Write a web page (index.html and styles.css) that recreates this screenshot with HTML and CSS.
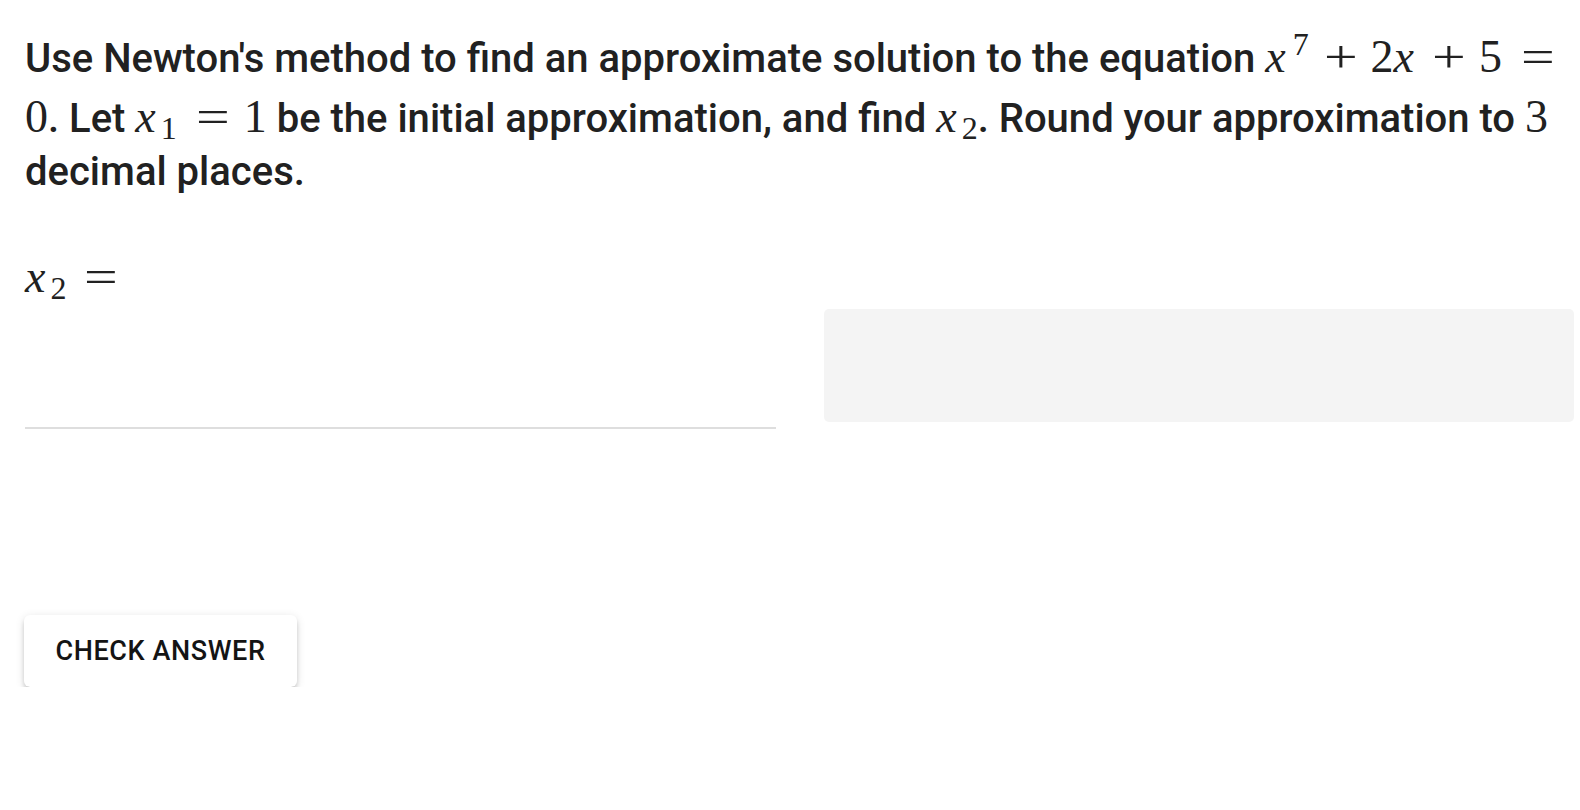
FILE: index.html
```html
<!DOCTYPE html>
<html>
<head>
<meta charset="utf-8">
<link rel="stylesheet" href="styles.css">
</head>
<body>
<div class="page">
  <p class="question">Use Newton's method to find an approximate solution to the equation <span class="math"><i>x</i><sup>7</sup><span class="op op-first">+</span>2<i>x</i><span class="op">+</span>5<span class="rel rel-end">=</span></span> <span class="math"><span class="strut"></span>0</span>. Let <span class="math"><i>x</i><sub>1</sub><span class="rel">=</span>1</span> be the initial approximation, and find <span class="math"><i>x</i><sub>2</sub></span>. Round your approximation to <span class="math">3</span> decimal places.</p>
  <div class="answer">
    <div class="field">
      <div class="label math"><i>x</i><sub>2</sub><span class="rel">=</span></div>
      <div class="input"></div>
    </div>
    <div class="preview"></div>
  </div>
  <button class="check">CHECK ANSWER</button>
</div>
</body>
</html>
```
FILE: styles.css
```css
html, body {
  margin: 0;
  padding: 0;
  background: #ffffff;
}
.page {
  padding: 32px 6px 0 25px;
  font-family: Roboto, "Liberation Sans", sans-serif;
  color: #212121;
}
.question {
  margin: 0;
  font-size: 40px;
  font-weight: 500;
  line-height: 53px;
  letter-spacing: 0;
}
.math {
  font-family: "Liberation Serif", "DejaVu Serif", serif;
  font-weight: 400;
  font-size: 46px;
  line-height: 44px;
  letter-spacing: 0;
  white-space: nowrap;
}
.strut {
  display: inline-block;
  width: 0;
  height: 47px;
  vertical-align: baseline;
}
.math i {
  font-style: italic;
  margin-right: 3px;
}
.math sup {
  font-size: 32px;
  line-height: 1;
  vertical-align: 0;
  position: relative;
  top: -17px;
  margin: 0 2px 0 4px;
}
.math sub {
  font-size: 32px;
  line-height: 1;
  vertical-align: 0;
  position: relative;
  top: 7px;
  margin-left: 2px;
}
.math .op,
.math .rel {
  display: inline-block;
  transform: scaleX(1.3);
}
.math .op {
  margin: 0 17px 0 19px;
}
.math .op-first {
  margin-left: 17px;
}
.math .rel {
  margin: 0 18px 0 23px;
}
.math .rel-end {
  margin-right: 8px;
}
.answer {
  display: flex;
  gap: 48px;
  margin-top: 54px;
}
.field {
  width: 751px;
  display: flex;
  flex-direction: column;
}
.label {
  line-height: 50px;
  height: 50px;
  color: #212121;
}
.label .rel {
  margin-left: 22px;
}
.input {
  height: 125px;
  border-bottom: 2px solid #dedede;
}
.preview {
  width: 750px;
  height: 113px;
  margin-top: 57px;
  background: #f4f4f4;
  border-radius: 5px;
}
.check {
  display: block;
  margin-top: 186px;
  margin-left: -1px;
  width: 273px;
  height: 72px;
  padding: 0;
  border: none;
  border-radius: 6px;
  background: #ffffff;
  color: #141414;
  font-family: Roboto, "Liberation Sans", sans-serif;
  font-weight: 500;
  font-size: 27px;
  letter-spacing: 0.6px;
  box-shadow: 0 6px 2px -4px rgba(0,0,0,0.2), 0 4px 4px 0 rgba(0,0,0,0.14), 0 2px 10px 0 rgba(0,0,0,0.12);
  cursor: pointer;
}
```
